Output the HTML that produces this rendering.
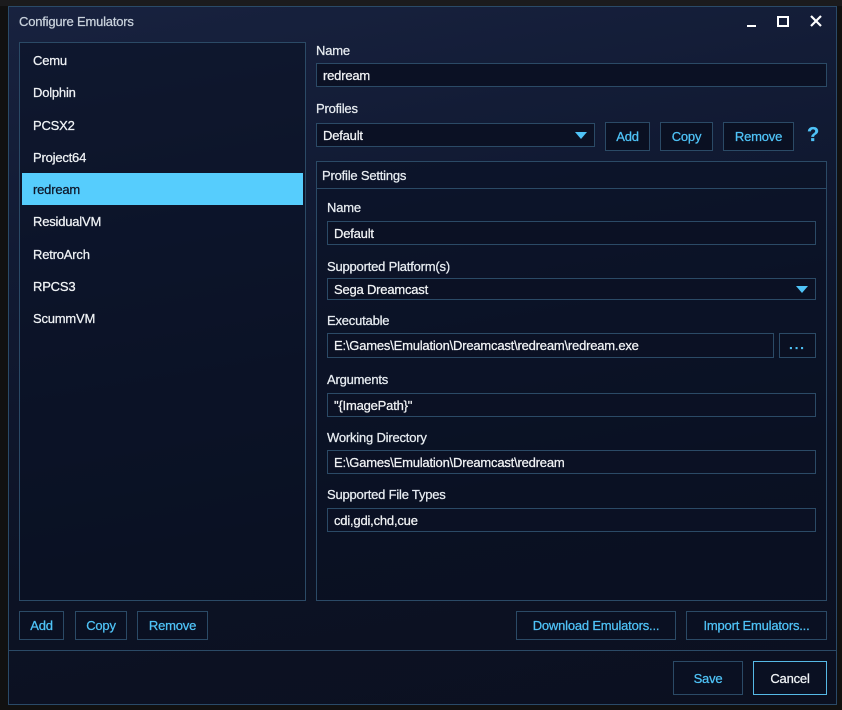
<!DOCTYPE html>
<html><head><meta charset="utf-8"><style>
*{box-sizing:border-box;margin:0;padding:0}
body{width:842px;height:710px;background:#111;overflow:hidden;position:relative;font-family:"Liberation Sans",sans-serif;font-size:13px;color:#e8edf2;letter-spacing:-0.2px;-webkit-text-stroke:0.25px currentColor}
.a{position:absolute}
#dlg{left:8px;top:6px;width:829px;height:699px;border:1px solid #2a4a68;background:linear-gradient(170deg,#18223f 0%,#111a33 30%,#0c1224 70%,#0b1020 100%)}
.box{position:absolute;border:1px solid #2b4a66;background:rgba(10,16,34,.55)}
.inp{position:absolute;border:1px solid #2b4a66;background:#0b1124;height:24px;padding-left:6px;line-height:24px;color:#f2f4f6}
.btn{position:absolute;border:1px solid #2b4a66;background:#0a1022;color:#4fc3f7;text-align:center;line-height:27px}
.lbl{position:absolute;color:#e8edf2;margin-top:1px}
.tri{position:absolute;width:0;height:0;border-left:6px solid transparent;border-right:6px solid transparent;border-top:7px solid #4fc3f7;-webkit-text-stroke:0}
.it{position:absolute;left:33px;color:#f0f3f6;margin-top:1px}
</style></head><body>
<div class="a" style="left:0;top:0;width:842px;height:6px;background:#1b1b1d"></div>
<div id="dlg" class="a"></div>
<div class="a" style="left:19px;top:14px;color:#c9d2dc">Configure Emulators</div>
<div class="a" style="left:747px;top:25px;width:9px;height:2px;background:#fff"></div>
<div class="a" style="left:777px;top:16px;width:12px;height:11px;border:2px solid #fff"></div>
<svg class="a" style="left:809px;top:14px" width="14" height="14"><path d="M2 2L12 12M12 2L2 12" stroke="#fff" stroke-width="2.2"/></svg>

<div class="box" style="left:19px;top:42px;width:287px;height:559px"></div>
<div class="a" style="left:22px;top:173px;width:281px;height:32px;background:#56cdfd"></div>
<div class="it" style="top:52px">Cemu</div>
<div class="it" style="top:84px">Dolphin</div>
<div class="it" style="top:117px">PCSX2</div>
<div class="it" style="top:149px">Project64</div>
<div class="it" style="top:181px;color:#0d1628">redream</div>
<div class="it" style="top:213px">ResidualVM</div>
<div class="it" style="top:246px">RetroArch</div>
<div class="it" style="top:278px">RPCS3</div>
<div class="it" style="top:310px">ScummVM</div>

<div class="lbl" style="left:316px;top:42px">Name</div>
<div class="inp" style="left:316px;top:63px;width:511px">redream</div>
<div class="lbl" style="left:316px;top:100px">Profiles</div>
<div class="inp" style="left:316px;top:123px;width:279px">Default</div>
<div class="tri" style="left:575px;top:132px"></div>
<div class="btn" style="left:605px;top:122px;width:45px">Add</div>
<div class="btn" style="left:660px;top:122px;width:53px">Copy</div>
<div class="btn" style="left:723px;top:122px;width:71px">Remove</div>
<div class="a" style="left:807px;top:124px;color:#4fc3f7;font-size:20px;font-weight:bold">?</div>

<div class="box" style="left:316px;top:161px;width:511px;height:440px"></div>
<div class="a" style="left:317px;top:188px;width:509px;height:1px;background:#2b4a66"></div>
<div class="lbl" style="left:322px;top:167px">Profile Settings</div>
<div class="lbl" style="left:327px;top:199px">Name</div>
<div class="inp" style="left:327px;top:221px;width:489px">Default</div>
<div class="lbl" style="left:327px;top:258px">Supported Platform(s)</div>
<div class="inp" style="left:327px;top:278px;width:489px;height:22px;line-height:22px">Sega Dreamcast</div>
<div class="tri" style="left:796px;top:286px"></div>
<div class="lbl" style="left:327px;top:312px">Executable</div>
<div class="inp" style="left:327px;top:333px;width:447px;height:25px">E:\Games\Emulation\Dreamcast\redream\redream.exe</div>
<div class="btn" style="left:779px;top:333px;width:37px;height:25px;line-height:22px;letter-spacing:2px;font-weight:bold">...</div>
<div class="lbl" style="left:327px;top:371px">Arguments</div>
<div class="inp" style="left:327px;top:393px;width:489px">"{ImagePath}"</div>
<div class="lbl" style="left:327px;top:429px">Working Directory</div>
<div class="inp" style="left:327px;top:450px;width:489px">E:\Games\Emulation\Dreamcast\redream</div>
<div class="lbl" style="left:327px;top:486px">Supported File Types</div>
<div class="inp" style="left:327px;top:508px;width:489px">cdi,gdi,chd,cue</div>

<div class="btn" style="left:19px;top:611px;width:45px;height:29px">Add</div>
<div class="btn" style="left:75px;top:611px;width:52px;height:29px">Copy</div>
<div class="btn" style="left:137px;top:611px;width:71px;height:29px">Remove</div>
<div class="btn" style="left:516px;top:611px;width:160px;height:29px">Download Emulators...</div>
<div class="btn" style="left:686px;top:611px;width:141px;height:29px">Import Emulators...</div>
<div class="a" style="left:9px;top:650px;width:827px;height:1px;background:#2b4a66"></div>
<div class="btn" style="left:673px;top:661px;width:70px;height:34px;line-height:33px">Save</div>
<div class="btn" style="left:753px;top:661px;width:74px;height:34px;line-height:33px;border-color:#56b9e6;color:#f0f3f6">Cancel</div>
</body></html>
